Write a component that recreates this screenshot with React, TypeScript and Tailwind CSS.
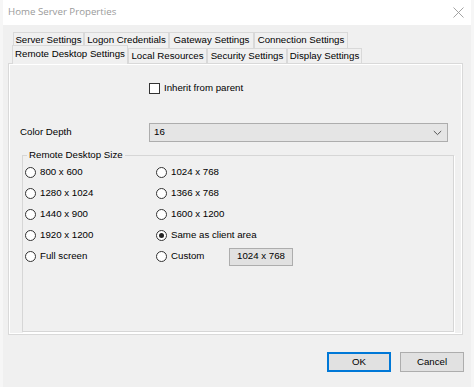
import React from "react";

const Radio = ({ label, checked }: { label: string; checked?: boolean }) => (
  <div className="flex items-center h-[21px]">
    <span className="w-[11px] h-[11px] rounded-full border border-[#333] bg-white flex items-center justify-center">
      {checked && <span className="w-[5px] h-[5px] rounded-full bg-[#222]" />}
    </span>
    <span className="ml-[4px]">{label}</span>
  </div>
);

const Tab = ({ label, w, active }: { label: string; w: number; active?: boolean }) => (
  <div
    style={{ width: w }}
    className={
      active
        ? "h-[19px] -mt-[2px] border border-b-0 border-[#d9d9d9] bg-[#f0f0f0] flex items-center justify-center pb-[1px] relative z-10"
        : "h-[16px] border border-b-0 border-[#d9d9d9] bg-[#f0f0f0] flex items-center justify-center"
    }
  >
    {label}
  </div>
);

export default function App() {
  return (
    <div
      className="w-[474px] h-[387px] bg-[#f0f0f0] text-black text-[9.7px] flex flex-col overflow-hidden border-l-[3px] border-r-[3px] border-[#f6f6f6]"
      style={{ fontFamily: '"Liberation Sans", Arial, sans-serif' }}
    >
      <div className="h-[25px] bg-white flex items-center justify-between shrink-0 -mx-[3px] pl-[8px] pr-[8px]">
        <span className="text-[9.7px] text-[#9a9a9a]" style={{ fontFamily: '"Open Sans", "Liberation Sans", sans-serif' }}>
          Home Server Properties
        </span>
        <svg width="11" height="11" viewBox="0 0 11 11" className="mr-[2px]">
          <path d="M0.5 0.5 L10.5 10.5 M10.5 0.5 L0.5 10.5" stroke="#999" strokeWidth="0.9" />
        </svg>
      </div>

      <div className="pl-[5px] pt-[7px] flex flex-col">
        <div className="flex ml-[5px]">
          <Tab label="Server Settings" w={71} />
          <Tab label="Logon Credentials" w={85} />
          <Tab label="Gateway Settings" w={85} />
          <Tab label="Connection Settings" w={94} />
        </div>
        <div className="flex ml-[4px] -mt-[1px] items-end">
          <Tab label="Remote Desktop Settings" w={116} active />
          <Tab label="Local Resources" w={79} />
          <Tab label="Security Settings" w={80} />
          <Tab label="Display Settings" w={75} />
        </div>

        <div className="w-[455px] h-[272px] -mt-[1px] border border-[#d9d9d9] shadow-[inset_1px_1px_0_#ffffff,inset_-1px_-1px_0_#ffffff] flex flex-col">
          <div className="flex items-center ml-[140px] mt-[19px] h-[10px]">
            <span className="w-[11px] h-[11px] border border-[#333] bg-white" />
            <span className="ml-[4px]">Inherit from parent</span>
          </div>

          <div className="flex items-center mt-[30px] h-[19px]">
            <span className="ml-[11px] w-[129px]">Color Depth</span>
            <div className="w-[299px] h-[19px] bg-[#e5e5e5] border border-[#adadad] flex items-center justify-between pl-[4px] pr-[5px]">
              <span>16</span>
              <svg width="9" height="6" viewBox="0 0 9 6">
                <path d="M0.8 1 L4.5 4.6 L8.2 1" stroke="#555" strokeWidth="1" fill="none" />
              </svg>
            </div>
          </div>

          <div className="ml-[13px] mt-[13px] w-[432px] h-[177px] border border-[#d6d6d6] shadow-[1px_1px_0_#ffffff] px-[2px] flex flex-col">
            <div className="-mt-[7px] ml-[2px] px-[2px] w-fit bg-[#f0f0f0] leading-[12px]">Remote Desktop Size</div>
            <div className="flex mt-[1px]">
              <div className="w-[131px] flex flex-col">
                <Radio label="800 x 600" />
                <Radio label="1280 x 1024" />
                <Radio label="1440 x 900" />
                <Radio label="1920 x 1200" />
                <Radio label="Full screen" />
              </div>
              <div className="flex flex-col">
                <Radio label="1024 x 768" />
                <Radio label="1366 x 768" />
                <Radio label="1600 x 1200" />
                <Radio label="Same as client area" checked />
                <div className="flex items-center h-[21px]">
                  <span className="w-[11px] h-[11px] rounded-full border border-[#333] bg-white" />
                  <span className="ml-[4px] w-[58px]">Custom</span>
                  <div className="w-[64px] h-[18px] bg-[#e1e1e1] border border-[#adadad] flex items-center justify-center">
                    1024 x 768
                  </div>
                </div>
              </div>
            </div>
          </div>
        </div>

        <div className="flex ml-[319px] mt-[17px] gap-[9px]">
          <div className="w-[64px] h-[20px] bg-[#e1e1e1] border-2 border-[#0078d7] flex items-center justify-center">
            OK
          </div>
          <div className="w-[64px] h-[20px] bg-[#e1e1e1] border border-[#adadad] flex items-center justify-center">
            Cancel
          </div>
        </div>
      </div>
    </div>
  );
}
